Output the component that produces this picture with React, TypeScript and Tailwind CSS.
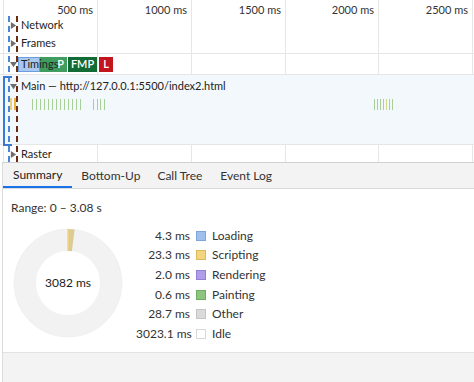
import React from "react"

const font = { fontFamily: '"Segoe UI", Lato, "Noto Sans", sans-serif' }

const gridX = [97, 191, 285, 378, 472]
const ticks = [
  { x: 97, label: "500 ms" },
  { x: 191, label: "1000 ms" },
  { x: 285, label: "1500 ms" },
  { x: 378, label: "2000 ms" },
  { x: 472, label: "2500 ms" },
]

const bars = [
  32, 36, 40, 44, 48, 52, 56, 60, 64, 68, 72, 76, 80, 93, 96.5, 100, 103.5, 374, 377, 380, 383, 386, 389, 392,
]

const legend = [
  { v: "4.3 ms", c: "bg-[#9fc0ec] border-[#7ea5dc]", t: "Loading" },
  { v: "23.3 ms", c: "bg-[#f4d57f] border-[#dcb85e]", t: "Scripting" },
  { v: "2.0 ms", c: "bg-[#b09ce9] border-[#9080d6]", t: "Rendering" },
  { v: "0.6 ms", c: "bg-[#8dc57e] border-[#6fab61]", t: "Painting" },
  { v: "28.7 ms", c: "bg-[#dadada] border-[#c4c4c4]", t: "Other" },
  { v: "3023.1 ms", c: "bg-white border-[#d8d8d8]", t: "Idle" },
]

function Tri({ down }: { down?: boolean }) {
  return (
    <svg width="7" height="7" viewBox="0 0 8 8" className="shrink-0">
      {down ? <path d="M0 1 L8 1 L4 7 Z" fill="#6e6e6e" /> : <path d="M1 0 L7 4 L1 8 Z" fill="#6e6e6e" />}
    </svg>
  )
}

function Donut() {
  const cx = 55
  const cy = 55
  const r = 54
  const a = (7 * Math.PI) / 180
  const x = cx + r * Math.sin(a)
  const y = cy - r * Math.cos(a)
  const ri = 32
  const xi = cx + ri * Math.sin(a)
  const yi = cy - ri * Math.cos(a)
  return (
    <svg width="110" height="110" viewBox="0 0 110 110">
      <circle cx={cx} cy={cy} r={43} fill="none" stroke="#f2f2f2" strokeWidth="22" />
      <circle cx={cx} cy={cy} r={54} fill="none" stroke="#ececec" strokeWidth="0.6" />
      <path
        d={`M${cx} ${cy - r} A${r} ${r} 0 0 1 ${x} ${y} L${xi} ${yi} A${ri} ${ri} 0 0 0 ${cx} ${cy - ri} Z`}
        fill="#dccc94"
      />
      <path d={`M${cx} ${cy - r} L${cx} ${cy - ri}`} stroke="#f4d57f" strokeWidth="1.5" />
    </svg>
  )
}

export default function App() {
  return (
    <div className="w-[474px] h-[382px] bg-white text-[#222] overflow-hidden flex flex-col" style={font}>
      {/* timeline */}
      <div className="relative h-[162px] shrink-0 text-[11px]">
        {gridX.map((x) => (
          <div key={x} className="absolute top-0 bottom-0 w-px bg-[#e6e6e6]" style={{ left: x }} />
        ))}
        <div className="absolute top-0 bottom-0 left-[3px] w-px bg-[#e6e6e6]" />

        <div className="relative flex flex-col">
          <div className="h-[18px] relative">
            {ticks.map((t) => (
              <span key={t.x} className="absolute top-[2px] text-[#333] whitespace-nowrap" style={{ right: 474 - t.x + 4 }}>
                {t.label}
              </span>
            ))}
          </div>
          <div className="h-[15px] flex items-center gap-[4px] pl-[10px]">
            <Tri />
            <span>Network</span>
          </div>
          <div className="h-[21px] flex items-center gap-[4px] pl-[10px] border-b border-[#e6e6e6]">
            <Tri />
            <span>Frames</span>
          </div>
          <div className="h-[21px] relative flex items-center gap-[4px] pl-[10px] border-b border-[#e6e6e6]">
            <div className="absolute left-[18px] top-[3px] h-[15px] w-[22px] bg-[#a9c8ee] border border-[#6a9ee0]" />
            <div className="absolute left-[40px] top-[3px] h-[15px] w-[27px] bg-[#3f9d60] flex items-center justify-end pr-[3px] text-white font-semibold">
              P
            </div>
            <div className="absolute left-[68px] top-[3px] h-[15px] w-[29px] bg-[#126a35] flex items-center justify-center text-white font-semibold">
              FMP
            </div>
            <div className="absolute left-[99px] top-[3px] h-[15px] w-[14px] bg-[#c2161c] flex items-center justify-center text-white font-semibold">
              L
            </div>
            <Tri down />
            <span className="relative">Timings</span>
          </div>
          <div className="h-[70px] relative bg-[#f3f8fd] border-b border-[#e6e6e6]">
            <div className="flex items-center gap-[4px] pl-[10px] pt-[3px]">
              <Tri down />
              <span>Main — http://127.0.0.1:5500/index2.html</span>
            </div>
            {bars.map((x, i) => (
              <div
                key={i}
                className={`absolute top-[24px] h-[11px] w-px ${i === 21 ? "bg-[#d4d98a]" : "bg-[#a8cf98]"}`}
                style={{ left: x }}
              />
            ))}
            <div className="absolute left-[10px] top-[23px] h-[12px] w-[2px] bg-[#e8cf86]" />
            <div className="absolute left-[14px] top-[23px] h-[12px] w-[2px] bg-[#f1b43c]" />
          </div>
          <div className="h-[16px] flex items-center gap-[4px] pl-[10px] pt-[3px]">
            <Tri />
            <span>Raster</span>
          </div>
        </div>

        {/* overlays */}
        <div className="absolute left-[8px] top-[16px] h-[146px] border-l-2 border-dashed border-[#4a85d8]" />
        <div className="absolute left-[16px] top-[16px] h-[146px] border-l-2 border-dashed border-[#6b2a12]" />
        <div className="absolute left-[3px] top-[76px] h-[70px] w-[9px] border-2 border-r-0 border-[#3a78d4]" />
      </div>

      {/* bottom panel */}
      <div className="flex-1 flex flex-col border-t border-[#d0d0d0] ml-[2px] border-l border-l-[#dcdcdc]">
        <div className="h-[26px] bg-[#f3f3f3] border-b border-[#dadada] flex text-[12px] text-[#333]">
          <div className="px-[10px] flex items-center border-b-2 border-[#1a73e8] text-[#222]">Summary</div>
          <div className="pl-[9px] pr-[8px] flex items-center">Bottom-Up</div>
          <div className="px-[9px] flex items-center">Call Tree</div>
          <div className="px-[9px] flex items-center">Event Log</div>
        </div>
        <div className="flex-1 flex flex-col">
          <div className="pl-[8px] pt-[10px] text-[12px] text-[#333]">Range: 0 – 3.08 s</div>
          <div className="flex pl-[10px] pt-[11px]">
            <div className="relative w-[110px] h-[110px]">
              <Donut />
              <div className="absolute inset-0 flex items-center justify-center text-[12px] text-[#222]">3082 ms</div>
            </div>
            <div className="flex flex-col -mt-[2px] ml-[13px] text-[12px] text-[#333]">
              {legend.map((l) => (
                <div key={l.t} className="h-[19.6px] flex items-center">
                  <span className="w-[54px] text-right whitespace-nowrap">{l.v}</span>
                  <span className={`ml-[6px] w-[10px] h-[10px] border ${l.c}`} />
                  <span className="ml-[6px]">{l.t}</span>
                </div>
              ))}
            </div>
          </div>
        </div>
        <div className="h-[30px] shrink-0 bg-[#f3f3f3] border-t border-[#e2e2e2]" />
      </div>
    </div>
  )
}
